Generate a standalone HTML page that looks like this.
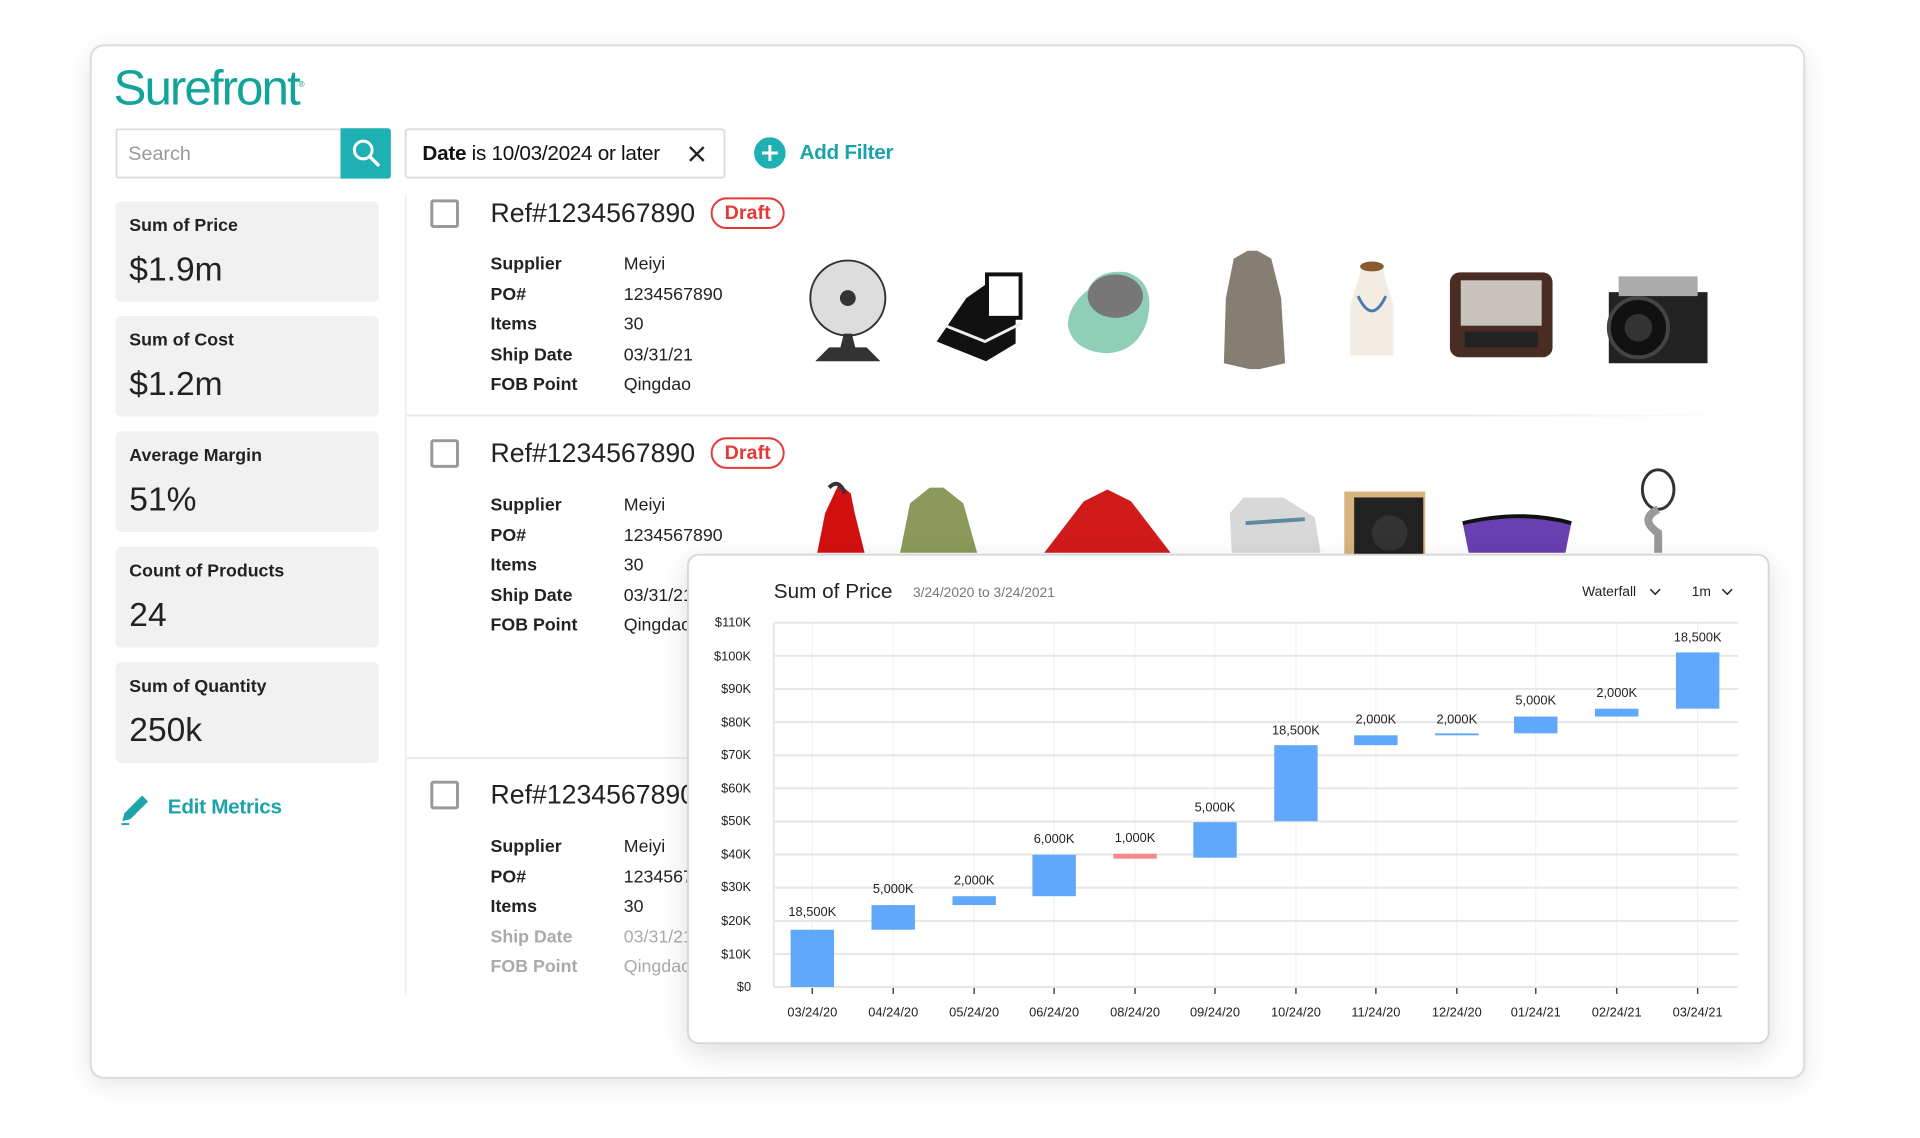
<!DOCTYPE html>
<html><head><meta charset="utf-8"><style>
*{margin:0;padding:0;box-sizing:border-box}
body{width:1920px;height:1138px;background:#fff;font-family:"Liberation Sans",sans-serif;position:relative;overflow:hidden;color:#222}
#w{position:absolute;left:0;top:0;width:1920px;height:1138px;transform:scale(0.987);transform-origin:0 0}
.a{position:absolute}
.card{left:91px;top:45px;width:1738px;height:1048px;border:2px solid #dcdcdc;border-radius:14px;box-shadow:0 6px 24px rgba(0,0,0,.10);background:#fff}
.logo{left:115px;top:60px;font-size:50px;color:#12a39b;letter-spacing:-2px;font-weight:400}
.search{left:117px;top:130px;width:229px;height:51px;border:2px solid #ddd;border-right:none;border-radius:3px 0 0 3px;font-size:20px;color:#999;padding:13px 11px}
.sbtn{left:345px;top:130px;width:51px;height:51px;background:#1fb0b4;border-radius:0 3px 3px 0}
.chip{left:410px;top:130px;width:325px;height:51px;border:2px solid #ddd;border-radius:4px;font-size:21px;padding:12px 16px;color:#111;letter-spacing:-0.3px}
.addf{left:810px;top:143px;font-size:21px;color:#1aa3ad;font-weight:bold;letter-spacing:-0.3px}
.metric{left:117px;width:267px;height:102px;background:#f1f1f1;border-radius:6px}
.metric b{position:absolute;left:14px;top:14px;font-size:18px;color:#222}
.metric span{position:absolute;left:14px;top:50px;font-size:34px;color:#222}
.sep{left:410px;top:198px;width:2px;height:810px;background:#eee}
.hr{left:412px;height:2px;width:1350px;background:linear-gradient(90deg,#eaeaea 80%,rgba(234,234,234,0))}
.cb{left:436px;width:29px;height:29px;border:3px solid #999;border-radius:3px}
.ref{left:497px;font-size:27px;color:#222}
.draft{width:75px;height:32px;border:2px solid #e53935;border-radius:16px;color:#e53935;font-size:20px;font-weight:bold;text-align:center;line-height:28px}
.lab{left:497px;font-size:18px;font-weight:bold;line-height:30.6px;color:#222}
.val{left:632px;font-size:18px;line-height:30.6px;color:#222}
.fade{color:#aaa}
.chart{left:696px;top:561px;width:1097px;height:497px;border:2px solid #d8d8d8;border-radius:12px;background:#fff;box-shadow:0 8px 28px rgba(0,0,0,.13)}
</style></head><body><div id="w">
<div class="a card"></div>
<div class="a logo">Surefront<sup style="font-size:8px">®</sup></div>
<div class="a search">Search</div>
<div class="a sbtn"><svg width="51" height="51"><circle cx="23" cy="22" r="9" fill="none" stroke="#fff" stroke-width="3"/><line x1="30" y1="29" x2="38" y2="37" stroke="#fff" stroke-width="3.5" stroke-linecap="round"/></svg></div>
<div class="a chip"><b>Date</b> is 10/03/2024 or later</div>
<svg class="a" style="left:696px;top:146px" width="20" height="20"><path d="M3 3L17 17M17 3L3 17" stroke="#222" stroke-width="2.4"/></svg>
<svg class="a" style="left:764px;top:139px" width="32" height="32"><circle cx="16" cy="16" r="16" fill="#1fb0b4"/><path d="M16 8v16M8 16h16" stroke="#fff" stroke-width="3"/></svg>
<div class="a addf">Add Filter</div>

<div class="a metric" style="top:204px"><b>Sum of Price</b><span>$1.9m</span></div>
<div class="a metric" style="top:320px"><b>Sum of Cost</b><span>$1.2m</span></div>
<div class="a metric" style="top:437px"><b>Average Margin</b><span>51%</span></div>
<div class="a metric" style="top:554px"><b>Count of Products</b><span>24</span></div>
<div class="a metric" style="top:671px"><b>Sum of Quantity</b><span>250k</span></div>
<svg class="a" style="left:120px;top:802px" width="36" height="34"><path d="M4 30l2-8L24 4l6 6L12 28z" fill="#1fa3ad"/><path d="M3 33h8" stroke="#1fa3ad" stroke-width="2"/></svg>
<div class="a addf" style="left:170px;top:806px">Edit Metrics</div>

<div class="a sep"></div>
<div class="a hr" style="top:420px"></div>
<div class="a hr" style="top:767px"></div>

<div class="a cb" style="top:202px"></div>
<div class="a ref" style="top:201px">Ref#1234567890</div>
<div class="a draft" style="left:720px;top:200px">Draft</div>
<div class="a lab" style="top:252px">Supplier<br>PO#<br>Items<br>Ship Date<br>FOB Point</div>
<div class="a val" style="top:252px">Meiyi<br>1234567890<br>30<br>03/31/21<br>Qingdao</div>
<div class="a cb" style="top:445px"></div>
<div class="a ref" style="top:444px">Ref#1234567890</div>
<div class="a draft" style="left:720px;top:443px">Draft</div>
<div class="a lab" style="top:496px">Supplier<br>PO#<br>Items<br>Ship Date<br>FOB Point</div>
<div class="a val" style="top:496px">Meiyi<br>1234567890<br>30<br>03/31/21<br>Qingdao</div>
<div class="a cb" style="top:791px"></div>
<div class="a ref" style="top:790px">Ref#1234567890</div>
<div class="a lab" style="top:842px">Supplier<br>PO#<br>Items<br><span class="fade">Ship Date<br>FOB Point</span></div>
<div class="a val" style="top:842px">Meiyi<br>1234567890<br>30<br><span class="fade">03/31/21<br>Qingdao</span></div>

<svg class="a" style="left:0;top:0" width="1920" height="1138">
<circle cx="859" cy="302" r="38" fill="#ddd" stroke="#333" stroke-width="2"/><circle cx="859" cy="302" r="8" fill="#333"/>
<path d="M855 338l-4 16h16l-4-16z" fill="#333"/><path d="M826 366l14-14h38l14 14z" fill="#333"/>
<path d="M979 302l20-14h30l0 60-30 18-50-20z" fill="#111"/><rect x="1000" y="278" width="34" height="44" fill="#fff" stroke="#111" stroke-width="4"/><path d="M958 330l40 16 36-18" fill="none" stroke="#eee" stroke-width="3"/>
<path d="M1082 330 q0-20 20-36 q10-22 40-18 q30 10 20 50 q-10 30-40 32 q-35-2-40-28z" fill="#8fcfb8"/><ellipse cx="1130" cy="300" rx="28" ry="22" fill="#777"/>
<path d="M1250 262l14-8 10 0 14 8 10 40 4 66-26 6-10 0-26-6 2-66z" fill="#867e73"/>
<path d="M1380 270h20l12 40 0 50h-44l0-50z" fill="#f2ece3"/><ellipse cx="1390" cy="270" rx="12" ry="5" fill="#8a5a30"/><path d="M1376 300q14 30 28 0" fill="none" stroke="#4a7ab0" stroke-width="3"/>
<rect x="1469" y="276" width="104" height="86" rx="10" fill="#4a2d22"/><rect x="1480" y="284" width="82" height="46" fill="#c8c3bc"/><rect x="1484" y="336" width="74" height="16" fill="#222"/>
<path d="M1630 296h100v72h-100z" fill="#222"/><rect x="1640" y="280" width="80" height="20" fill="#aaa"/><circle cx="1660" cy="332" r="30" fill="#111" stroke="#444" stroke-width="4"/><circle cx="1660" cy="332" r="14" fill="#333"/>
<path d="M828 560l8-40 14-30 12 10 4 20 10 40z" fill="#d21010"/><path d="M840 494q10-10 16 6" stroke="#333" stroke-width="4" fill="none"/>
<path d="M912 560l10-50 20-16 14 0 20 16 14 50z" fill="#8b9a5a"/>
<path d="M1058 560l40-52 24-12 24 12 40 52z" fill="#d11a1a"/>
<path d="M1246 520l14-16 40 0 32 20 6 36h-90z" fill="#d8d8d8"/><path d="M1262 530l60-4" stroke="#5e8aa0" stroke-width="4"/>
<rect x="1362" y="498" width="82" height="64" fill="#d7b47e"/><rect x="1372" y="504" width="70" height="58" fill="#222"/><circle cx="1408" cy="540" r="18" fill="#333"/>
<path d="M1482 530q60-12 110 0l-6 30h-98z" fill="#6a3fb0"/><path d="M1482 530q60-14 110 0" stroke="#111" stroke-width="4" fill="none"/>
<ellipse cx="1680" cy="496" rx="16" ry="20" fill="none" stroke="#333" stroke-width="3"/><path d="M1680 516q-20 10 0 24v20" stroke="#999" stroke-width="8" fill="none"/>
</svg>

<div class="a chart"></div>
<svg class="a" style="left:0;top:0" width="1920" height="1138" font-family="Liberation Sans, sans-serif">
<text x="784" y="606" font-size="21" fill="#222">Sum of Price</text>
<text x="925" y="605" font-size="14" fill="#777">3/24/2020 to 3/24/2021</text>
<text x="1603" y="604" font-size="14" fill="#222">Waterfall</text>
<path d="M1672 597l5 5 5-5" stroke="#222" fill="none" stroke-width="1.5"/>
<text x="1714" y="604" font-size="14" fill="#222">1m</text>
<path d="M1745 597l5 5 5-5" stroke="#222" fill="none" stroke-width="1.5"/>
<g stroke="#f0f0f0" stroke-width="1">
<line x1="823" y1="631" x2="823" y2="1000"/><line x1="905" y1="631" x2="905" y2="1000"/><line x1="987" y1="631" x2="987" y2="1000"/><line x1="1068" y1="631" x2="1068" y2="1000"/><line x1="1150" y1="631" x2="1150" y2="1000"/><line x1="1231" y1="631" x2="1231" y2="1000"/><line x1="1313" y1="631" x2="1313" y2="1000"/><line x1="1394" y1="631" x2="1394" y2="1000"/><line x1="1476" y1="631" x2="1476" y2="1000"/><line x1="1556" y1="631" x2="1556" y2="1000"/><line x1="1638" y1="631" x2="1638" y2="1000"/><line x1="1720" y1="631" x2="1720" y2="1000"/>
</g>
<g stroke="#e6e6e6" stroke-width="2">
<line x1="784" y1="631" x2="1761" y2="631"/><line x1="784" y1="664.5" x2="1761" y2="664.5"/><line x1="784" y1="698" x2="1761" y2="698"/><line x1="784" y1="731.6" x2="1761" y2="731.6"/><line x1="784" y1="765.2" x2="1761" y2="765.2"/><line x1="784" y1="798.7" x2="1761" y2="798.7"/><line x1="784" y1="832.3" x2="1761" y2="832.3"/><line x1="784" y1="865.8" x2="1761" y2="865.8"/><line x1="784" y1="899.4" x2="1761" y2="899.4"/><line x1="784" y1="933" x2="1761" y2="933"/><line x1="784" y1="966.5" x2="1761" y2="966.5"/><line x1="784" y1="1000" x2="1761" y2="1000"/>
<line x1="784" y1="631" x2="784" y2="1000"/>
</g>
<g font-size="13" fill="#222" text-anchor="end">
<text x="761" y="635">$110K</text><text x="761" y="669">$100K</text><text x="761" y="702">$90K</text><text x="761" y="736">$80K</text><text x="761" y="769">$70K</text><text x="761" y="803">$60K</text><text x="761" y="836">$50K</text><text x="761" y="870">$40K</text><text x="761" y="903">$30K</text><text x="761" y="937">$20K</text><text x="761" y="971">$10K</text><text x="761" y="1004">$0</text>
</g>
<g stroke="#444" stroke-width="1.5">
<line x1="823" y1="1001" x2="823" y2="1007"/><line x1="905" y1="1001" x2="905" y2="1007"/><line x1="987" y1="1001" x2="987" y2="1007"/><line x1="1068" y1="1001" x2="1068" y2="1007"/><line x1="1150" y1="1001" x2="1150" y2="1007"/><line x1="1231" y1="1001" x2="1231" y2="1007"/><line x1="1313" y1="1001" x2="1313" y2="1007"/><line x1="1394" y1="1001" x2="1394" y2="1007"/><line x1="1476" y1="1001" x2="1476" y2="1007"/><line x1="1556" y1="1001" x2="1556" y2="1007"/><line x1="1638" y1="1001" x2="1638" y2="1007"/><line x1="1720" y1="1001" x2="1720" y2="1007"/>
</g>
<g font-size="13" fill="#222" text-anchor="middle">
<text x="823" y="1030">03/24/20</text><text x="905" y="1030">04/24/20</text><text x="987" y="1030">05/24/20</text><text x="1068" y="1030">06/24/20</text><text x="1150" y="1030">08/24/20</text><text x="1231" y="1030">09/24/20</text><text x="1313" y="1030">10/24/20</text><text x="1394" y="1030">11/24/20</text><text x="1476" y="1030">12/24/20</text><text x="1556" y="1030">01/24/21</text><text x="1638" y="1030">02/24/21</text><text x="1720" y="1030">03/24/21</text>
</g>
<g fill="#60a8fb">
<rect x="801" y="942" width="44" height="58"/>
<rect x="883" y="917" width="44" height="25"/>
<rect x="965" y="908" width="44" height="9"/>
<rect x="1046" y="866" width="44" height="42"/>
<rect x="1209" y="833" width="44" height="36"/>
<rect x="1291" y="755" width="44" height="77"/>
<rect x="1372" y="745" width="44" height="10"/>
<rect x="1454" y="743" width="44" height="2"/>
<rect x="1534" y="726" width="44" height="17"/>
<rect x="1616" y="718" width="44" height="8"/>
<rect x="1698" y="661" width="44" height="57"/>
</g>
<rect x="1128" y="865" width="44" height="5" fill="#f58a8a"/>
<g font-size="13" fill="#222" text-anchor="middle">
<text x="823" y="928">18,500K</text><text x="905" y="905">5,000K</text><text x="987" y="896">2,000K</text><text x="1068" y="854">6,000K</text><text x="1150" y="853">1,000K</text><text x="1231" y="822">5,000K</text><text x="1313" y="744">18,500K</text><text x="1394" y="733">2,000K</text><text x="1476" y="733">2,000K</text><text x="1556" y="714">5,000K</text><text x="1638" y="706">2,000K</text><text x="1720" y="650">18,500K</text>
</g>
</svg>
</div></body></html>
